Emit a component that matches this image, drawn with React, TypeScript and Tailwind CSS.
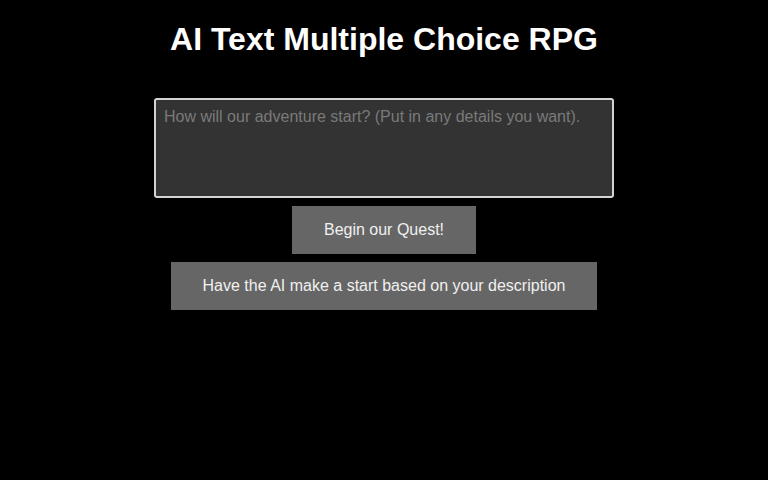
import React from "react";

const font = { fontFamily: '"Liberation Sans", Arial, sans-serif' };

const App = () => {
  return (
    <div
      className="min-h-[480px] w-full bg-black flex flex-col items-center text-white"
      style={font}
    >
      <h1 className="mt-[21px] text-[32px] font-bold leading-[37px]">
        AI Text Multiple Choice RPG
      </h1>
      <div className="mt-[40px] flex flex-col items-center gap-2">
        <textarea
          className="w-[460px] h-[100px] resize-none rounded-[3px] border-2 border-[#d4d4d4] bg-[#333333] p-2 text-base leading-[18px] text-white placeholder:text-[#7a7a7a] outline-none"
          placeholder="How will our adventure start? (Put in any details you want)."
        />
        <button className="h-12 px-8 bg-[#666666] text-base text-[#f0f0f0]">
          Begin our Quest!
        </button>
        <button className="h-12 px-8 bg-[#666666] text-base text-[#f0f0f0]">
          Have the AI make a start based on your description
        </button>
      </div>
    </div>
  );
};

export default App;
